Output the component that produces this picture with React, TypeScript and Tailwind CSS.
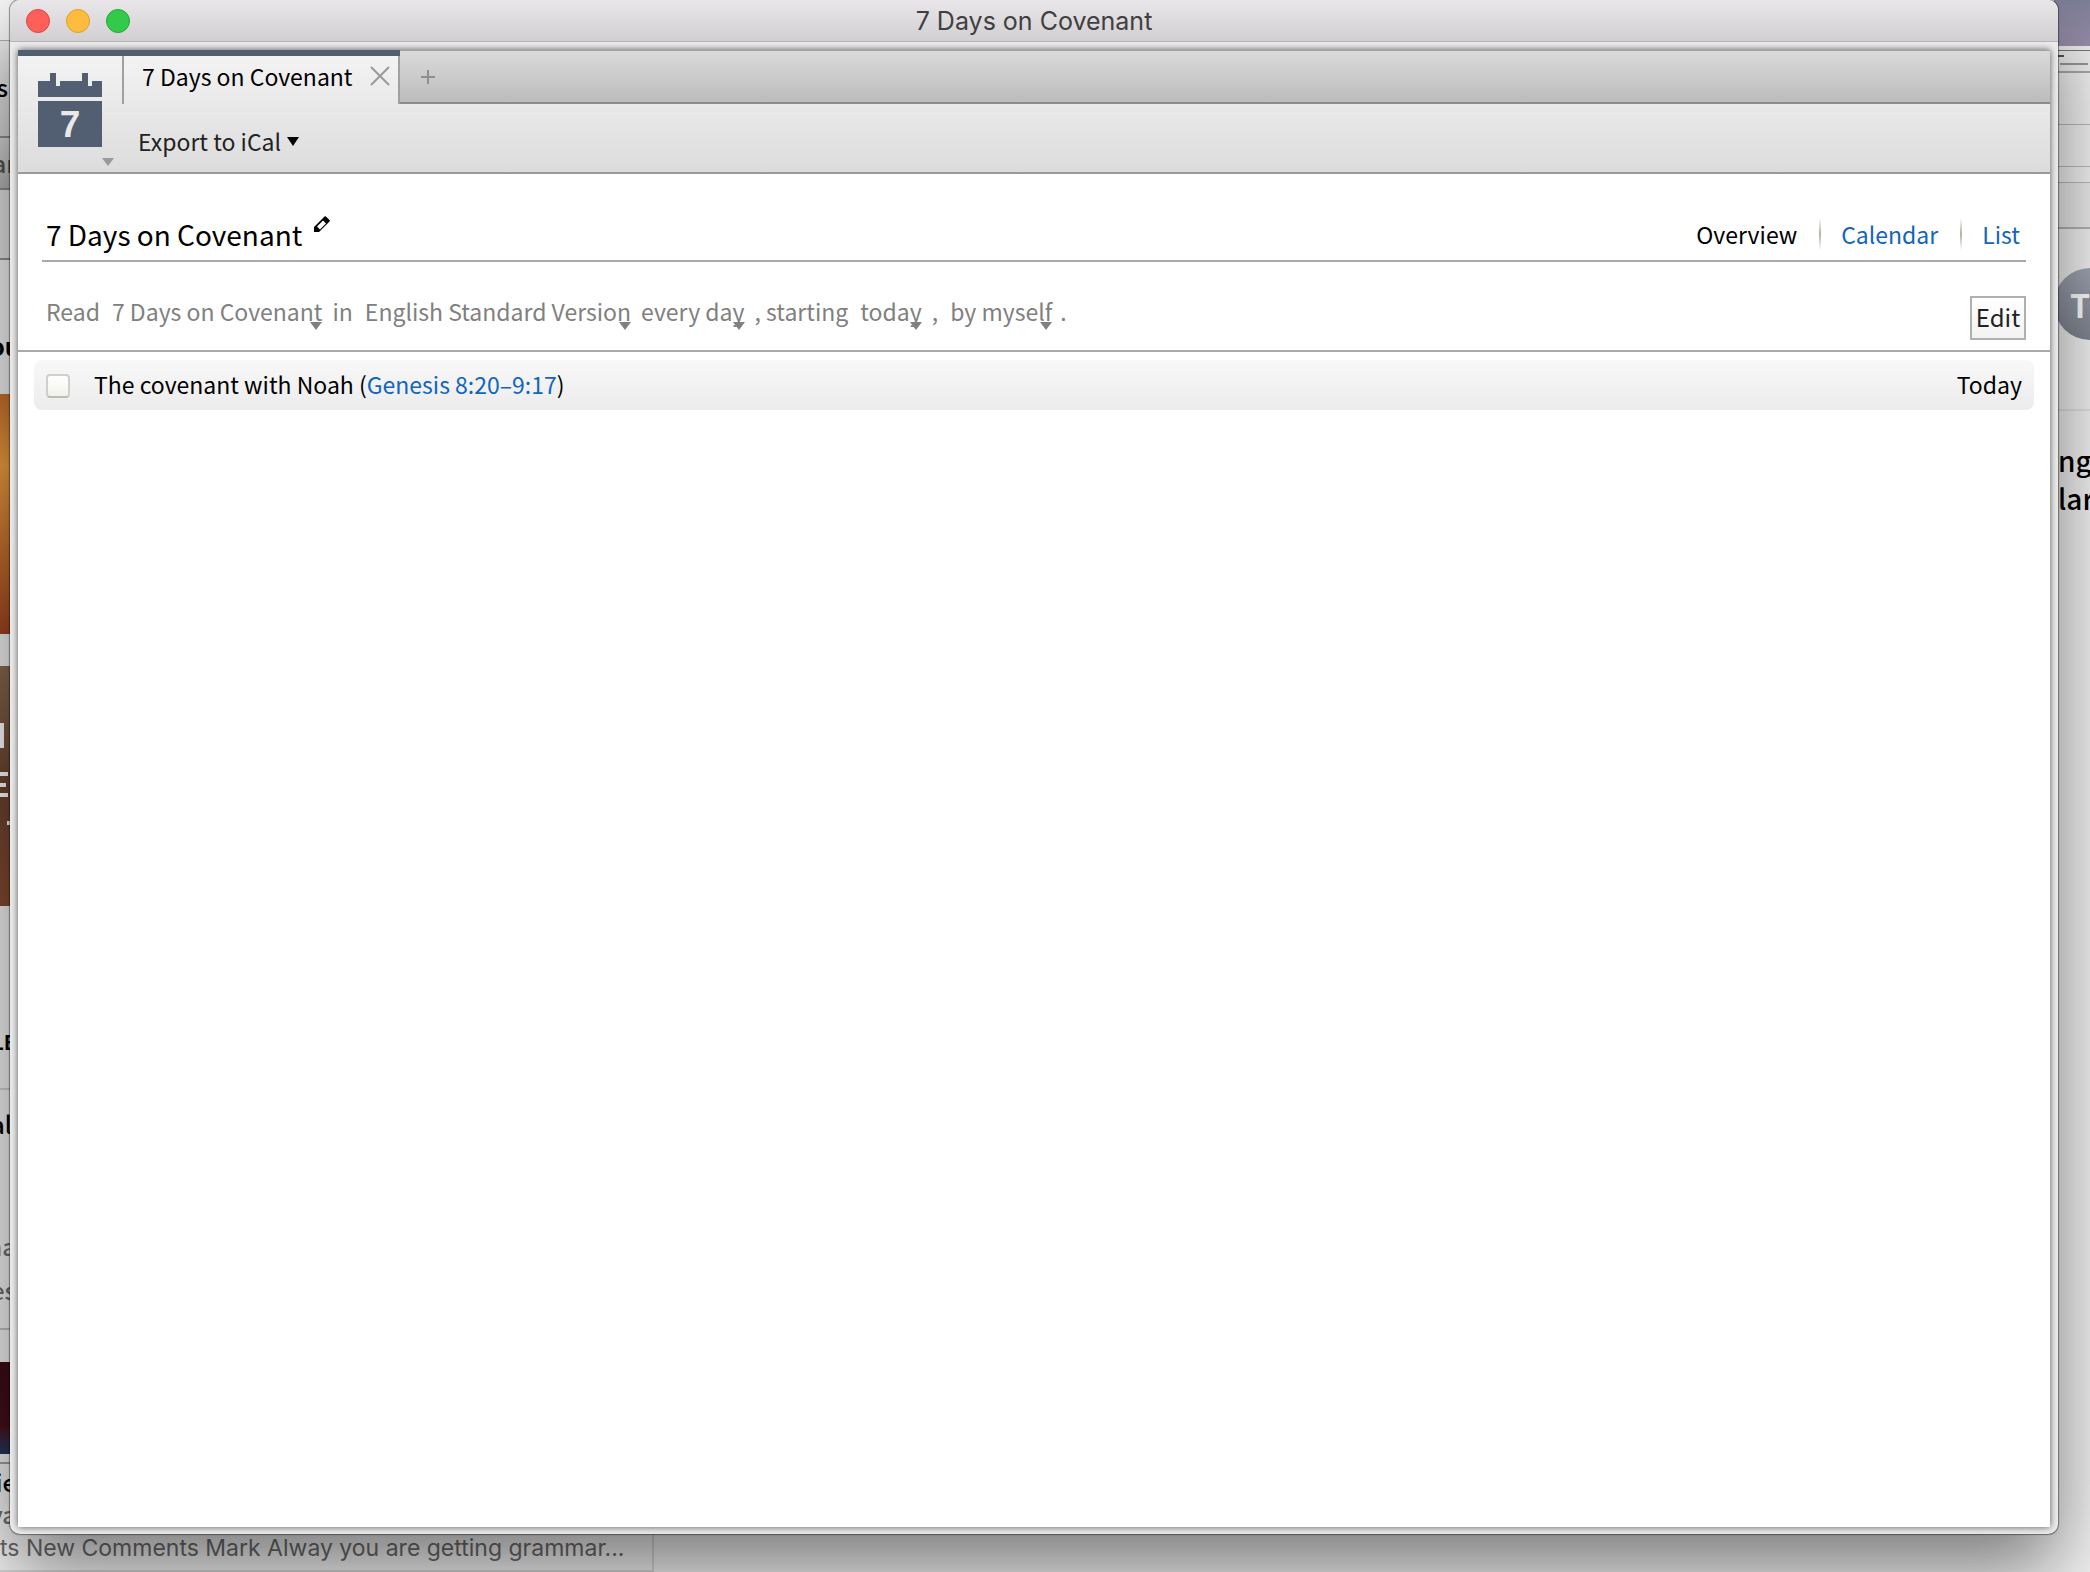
import React, { useState } from 'react';

interface PlanOption {
  before?: string;
  value: string;
  after?: string;
}

const planOptions: PlanOption[] = [
  { before: 'Read', value: '7 Days on Covenant' },
  { before: 'in', value: 'English Standard Version' },
  { value: 'every day' },
  { before: ', starting', value: 'today' },
  { before: ',', value: 'by myself', after: '.' },
];

const views = ['Overview', 'Calendar', 'List'];

const Caret: React.FC<{ className: string }> = ({ className }) => (
  <svg viewBox="0 0 12 8" preserveAspectRatio="none" className={className} aria-hidden="true">
    <path d="M0 0h12L6 8z" fill="currentColor" />
  </svg>
);

const CalendarIcon: React.FC = () => (
  <svg width="64" height="74" viewBox="0 0 64 74" aria-hidden="true">
    <path d="M0 8h12V0h6v13h4V8h22V0h6v13h4V8h10v16H0z" fill="#525e71" />
    <path d="M0 28h64v46H0z" fill="#525e71" />
    <text x="32" y="64" textAnchor="middle" fontFamily="Liberation Sans, sans-serif" fontWeight="700" fontSize="37" fill="#e9e9e9">7</text>
  </svg>
);

const PencilIcon: React.FC = () => (
  <svg width="16" height="16" viewBox="0 0 16 16" aria-hidden="true">
    <path d="M0 16v-5L10.5 .5q.7-.7 1.4 0L15.5 4q.7.7 0 1.4L5 16z" fill="#000" />
    <path d="M9 4.5L12 7.5L6 13.5L3 10.5z" fill="#fff" />
  </svg>
);

// What can be seen of the windows behind this one
const Backdrop: React.FC = () => (
  <div className="absolute inset-0 flex flex-col overflow-hidden bg-[#f3f3f3]" aria-hidden="true">
    <div className="flex min-h-0 flex-1 justify-between">
      <div className="flex w-4 flex-col overflow-hidden text-2xl font-medium text-black">
        <div className="h-10 shrink-0 bg-[#f8f8f8]" />
        <div className="flex h-24 shrink-0 items-center justify-end border-t border-[#b0b0b0] bg-linear-to-b from-[#f0f0f0] to-[#d6d6d6] pr-2 pb-1">s</div>
        <div className="flex h-[54px] shrink-0 items-center justify-end border-y-2 border-[#8c8c8c] bg-linear-to-b from-[#d8d8d8] to-[#b4b4b4] text-[#555]">ar</div>
        <div className="h-[70px] shrink-0 border-b-2 border-[#909090] bg-[#e2e2e2]" />
        <div className="flex h-[134px] w-5 shrink-0 items-end justify-end pb-8 font-bold">ou</div>
        <div className="h-60 shrink-0 bg-linear-to-b from-[#c9702c] via-[#f0a040] via-30% to-[#a04320]" />
        <div className="h-8 shrink-0" />
        <div className="flex h-60 shrink-0 flex-col bg-linear-to-b from-[#8a6a50] via-[#6a4230] to-[#874a30] pt-[57px]">
          <div className="h-[25px] w-1 shrink-0 bg-white" />
          <div className="mt-6 flex h-[25px] w-2 shrink-0 flex-col justify-between">
            <div className="h-1 bg-white" />
            <div className="h-1 w-1.5 bg-white" />
            <div className="h-1 bg-white" />
          </div>
          <div className="mt-6 ml-[7px] h-1 bg-white" />
        </div>
        <div className="flex h-[184px] shrink-0 items-end justify-end border-b-2 border-[#d0d0d0] pb-8 text-xl font-bold">.LE</div>
        <div className="flex h-[58px] shrink-0 items-end justify-end pr-1 pb-2">al</div>
        <div className="flex h-[118px] shrink-0 items-end justify-end pb-1 text-[#707070]">na</div>
        <div className="flex h-16 shrink-0 items-start justify-end border-b-2 border-[#c0c0c0] pt-2 text-[#707070]">es</div>
        <div className="h-8 shrink-0" />
        <div className="h-[92px] shrink-0 bg-linear-to-b from-[#3c0b18] via-[#440f1c] via-70% to-[#1d3560]" />
        <div className="mt-2 flex shrink-0 flex-col items-end border-t-2 border-[#a0a0a0] pt-0.5">
          <span>ie</span>
          <span className="text-[#707070]">va</span>
        </div>
      </div>
      <div className="flex w-9 flex-col overflow-hidden">
        <div className="h-[46px] shrink-0 bg-linear-to-b from-[#80809a] to-[#9a90ac]" />
        <div className="h-[27px] shrink-0 border-b-2 border-[#aaa] bg-[#f0f0f0] pt-1">
          <div className="border-t border-[#777] pt-1">
            <div className="ml-1 h-0.5 w-1.5 bg-[#555]" />
            <div className="mt-1.5 ml-1.5 h-0.5 w-7 bg-[#999]" />
          </div>
        </div>
        <div className="h-[52px] shrink-0 border-b border-[#bbb]" />
        <div className="h-[42px] shrink-0 border-b border-[#bbb]" />
        <div className="h-4 shrink-0 border-b border-[#bbb]" />
        <div className="h-[46px] shrink-0 border-b-2 border-[#b5b5b5] bg-[#ececec]" />
        <div className="flex h-[182px] shrink-0 items-start border-b-2 border-[#e2e2e2] pt-[39px]">
          <div className="flex size-[72px] shrink-0 items-center rounded-full bg-linear-to-b from-[#a0a6b4] to-[#7f8590] pl-4 text-[32px] font-bold text-white">T</div>
        </div>
        <div className="shrink-0 pt-[30px] pl-1 text-[28px] leading-[38px] font-medium text-black">
          <div>ng</div>
          <div>lar</div>
        </div>
      </div>
    </div>
    <div className="h-[38px] w-[654px] shrink-0 truncate border-r-2 border-b-2 border-[#d8d8d8] font-[Inter,sans-serif] text-[23px] leading-7 text-[#6c6c6c]">
      ts New Comments Mark Alway you are getting grammar...
    </div>
  </div>
);

const TitleBar: React.FC<{ title: string }> = ({ title }) => (
  <header className="relative flex h-[42px] shrink-0 items-center justify-center rounded-t-[10px] border-b border-[#b5b3b5] bg-linear-to-b from-[#e9e7e9] to-[#d2cfd2]">
    <div className="absolute left-4 flex gap-4">
      <button aria-label="Close window" className="size-6 rounded-full border border-[#e0443e] bg-[#fe5f58]" />
      <button aria-label="Minimize window" className="size-6 rounded-full border border-[#dfa023] bg-[#febc3f]" />
      <button aria-label="Zoom window" className="size-6 rounded-full border border-[#1fa933] bg-[#34ca49]" />
    </div>
    <h1 className="font-[Inter,sans-serif] text-[25px] leading-8 text-[#404040]">{title}</h1>
  </header>
);

const App: React.FC = () => {
  const [view, setView] = useState('Overview');
  const [done, setDone] = useState(false);

  return (
    <div className="relative flex min-h-screen flex-col overflow-hidden pr-8 pb-[38px] pl-[10px] font-['Noto_Sans_CJK_SC','Noto_Sans',sans-serif] text-[23px] leading-8 text-black">
      <Backdrop />
      <div className="relative flex flex-1 flex-col rounded-[10px] bg-[#ececec] shadow-[0_0_1px_1px_rgba(0,0,0,0.4),0_36px_80px_rgba(0,0,0,0.5)]">
        <TitleBar title="7 Days on Covenant" />

        <main className="mx-2 mt-2 mb-[7px] flex flex-1 flex-col bg-white shadow-[0_0_7px_rgba(0,0,0,0.65)]">
          <div className="flex h-[124px] shrink-0 border-b-2 border-[#9a9a9a] bg-linear-to-b from-[#f4f4f4] to-[#dcdcdc]">
            <button aria-label="Panel menu" className="relative flex w-[104px] shrink-0 justify-center border-t-[6px] border-[#525e71] pt-[17px]">
              <CalendarIcon />
              <Caret className="absolute right-2 bottom-[6px] h-2 w-3 text-[#999]" />
            </button>
            <div className="flex flex-1 flex-col">
              <div className="flex h-[54px]">
                <div className="flex border-t-[6px] border-[#525e71]">
                  <div className="flex w-[278px] items-center justify-between border-x-2 border-[#a0a0a0] pr-2 pb-2 pl-[18px]">
                    <span>7 Days on Covenant</span>
                    <button aria-label="Close tab">
                      <svg width="20" height="20" viewBox="0 0 20 20" fill="none" stroke="#999" strokeWidth="2">
                        <path d="M1 1l18 18M19 1L1 19" />
                      </svg>
                    </button>
                  </div>
                </div>
                <div className="flex flex-1 items-center border-t border-b-2 border-t-[#a0a0a0] border-b-[#8c8c8c] bg-linear-to-b from-[#dadada] to-[#bcbcbc] pl-5">
                  <button aria-label="New tab">
                    <svg width="16" height="16" viewBox="0 0 16 16" fill="none" stroke="#8f8f8f" strokeWidth="2">
                      <path d="M8 1v14M1 8h14" />
                    </svg>
                  </button>
                </div>
              </div>
              <div className="flex flex-1 items-center pt-1.5 pl-4">
                <button className="flex items-center gap-1.5 text-[#222]">
                  Export to iCal
                  <Caret className="h-[9px] w-3 text-black" />
                </button>
              </div>
            </div>
          </div>

          <div className="mx-6 flex h-[88px] shrink-0 items-end justify-between border-b-2 border-[#a9a9a9]">
            <div className="flex pb-1.5 pl-1">
              <h2 className="text-[28px] leading-10">7 Days on Covenant</h2>
              <button aria-label="Rename plan" className="ml-3 h-5">
                <PencilIcon />
              </button>
            </div>
            <nav className="flex items-center pr-1.5 pb-2.5">
              {views.map((name, index) => (
                <React.Fragment key={name}>
                  {index > 0 && <span className="mr-5 ml-[22px] h-8 w-0.5 bg-linear-to-b from-transparent via-[#b0b0a4] to-transparent" />}
                  <a
                    href={`#${name.toLowerCase()}`}
                    onClick={() => setView(name)}
                    className={view === name ? 'text-black' : 'text-[#1166bb]'}
                  >
                    {name}
                  </a>
                </React.Fragment>
              ))}
            </nav>
          </div>

          <div className="flex h-[90px] shrink-0 items-start justify-between border-b-2 border-[#a9a9a9] px-6 pt-[34px]">
            <div className="-mt-px flex pl-1 text-[#808080]">
              {planOptions.map((option) => (
                <div key={option.value} className="mr-2.5 flex">
                  {option.before}
                  <button className={option.before ? 'relative ml-3' : 'relative'}>
                    {option.value}
                    <Caret className="absolute right-0 bottom-[-3px] h-2 w-3" />
                  </button>
                  {option.after && <span className="ml-2">{option.after}</span>}
                </div>
              ))}
            </div>
            <button className="h-11 w-14 border-2 border-[#b0b0b0] bg-linear-to-b from-white to-[#f2f2f2] pb-0.5 text-2xl text-[#222]">Edit</button>
          </div>

          <ul className="px-4 pt-2">
            <li className="flex h-[50px] items-center rounded-lg bg-linear-to-b from-[#f8f8f8] to-[#ececec] px-3 pb-0.5">
              <input
                id="reading-1"
                type="checkbox"
                checked={done}
                onChange={() => setDone(!done)}
                className="mt-1 size-6 appearance-none rounded border-2 border-[#d0d0ca] border-b-[#bcbcb4] bg-linear-to-b from-white to-[#f2f2ec] checked:bg-[#1166bb]"
              />
              <label htmlFor="reading-1" className="ml-6 whitespace-pre">The covenant with Noah (</label>
              <a href="#genesis" className="text-[#1166bb]">Genesis 8:20–9:17</a>
              <span>)</span>
              <span className="ml-auto">Today</span>
            </li>
          </ul>
        </main>
      </div>
    </div>
  );
};

export default App;
